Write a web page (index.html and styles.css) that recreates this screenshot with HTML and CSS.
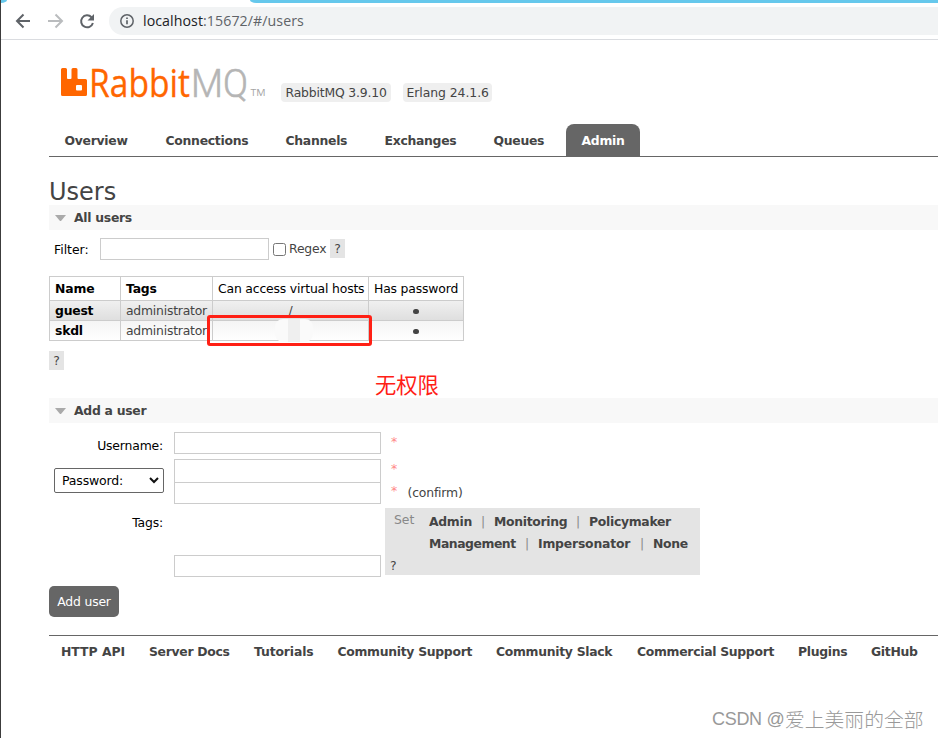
FILE: index.html
```
<!DOCTYPE html>
<html lang="en">
<head>
<meta charset="utf-8">
<title>RabbitMQ Management</title>
<link rel="stylesheet" href="styles.css">
</head>
<body>
<div class="window">
  <div class="tabstrip"><span class="strip-left"></span><span class="strip-right"></span></div>
  <div class="toolbar">
    <svg class="nav-icons" width="100" height="22" viewBox="0 0 100 22" fill="none" stroke-width="2">
      <path d="M30 11H17.5M23.500 4.500L17 11l6.500 6.500" stroke="#5f6368"/>
      <path d="M48 11h13.500M55.500 4.500L62 11l-6.500 6.500" stroke="#babcbe"/>
      <path d="M91.500 7.200A6 6 0 1 0 92.900 13" stroke="#5f6368"/>
      <path d="M94 4v6.500h-6.500z" fill="#5f6368"/>
    </svg>
    <div class="omnibox">
      <svg width="16" height="16" viewBox="0 0 16 16" fill="none" stroke="#5f6368"><circle cx="8" cy="8" r="6.200" stroke-width="1.500"/><path d="M8 7.200v4M8 4.500v1.600" stroke-width="1.700"/></svg>
      <span class="url"><b>localhost</b>:15672/#/users</span>
    </div>
  </div>
  <div class="page">
    <header class="header">
      <svg class="logo" width="220" height="56" viewBox="0 0 220 56">
        <path fill="#f60" fill-rule="evenodd" d="M13 9.500q0-1.500 1.500-1.500h3q1.500 0 1.500 1.500V18q0 1 1 1h2.500q1 0 1-1V9.500q0-1.500 1.500-1.500h3q1.500 0 1.500 1.500V18q0 1 1 1h7q1.500 0 1.500 1.500v14q0 1.500-1.500 1.500h-23Q13 36 13 34.500zM29 25q-1 0-1 1v3.500q0 1 1 1h4q1 0 1-1V26q0-1-1-1z"/>
        <text class="logo-rabbit" x="41" y="36.500" textLength="101" lengthAdjust="spacingAndGlyphs">Rabbit</text>
        <text class="logo-mq" x="143" y="36.500" textLength="57" lengthAdjust="spacingAndGlyphs">MQ</text>
        <text class="logo-tm" x="202.500" y="36" textLength="15" lengthAdjust="spacingAndGlyphs">TM</text>
      </svg>
      <span class="version v1">RabbitMQ 3.9.10</span>
      <span class="version v2">Erlang 24.1.6</span>
    </header>
    <nav class="tabs">
      <a class="w1">Overview</a><a class="w2">Connections</a><a class="w3">Channels</a><a class="w4">Exchanges</a><a class="w5">Queues</a><a class="selected">Admin</a>
    </nav>
    <h1>Users</h1>
    <h2><i class="arrow"></i>All users</h2>
    <div class="filter">
      <span class="label">Filter:</span><input type="text"><input class="check" type="checkbox"><span class="regex">Regex</span><span class="help">?</span>
    </div>
    <div class="table-wrap">
      <table class="list">
        <thead><tr><th class="strong">Name</th><th class="strong">Tags</th><th>Can access virtual hosts</th><th>Has password</th></tr></thead>
        <tbody>
          <tr class="alt1"><td class="strong">guest</td><td>administrator</td><td class="c">/</td><td class="c"><i class="dot"></i></td></tr>
          <tr class="alt2"><td class="strong">skdl</td><td>administrator</td><td class="c"></td><td class="c"><i class="dot"></i></td></tr>
        </tbody>
      </table>
      <span class="smudge"></span>
      <span class="marker"></span>
    </div>
    <span class="help below">?</span>
    <div class="note">无权限</div>
    <h2><i class="arrow"></i>Add a user</h2>
    <form class="form">
      <div class="label user-label">Username:</div>
      <div class="field"><input type="text"><span class="star">*</span></div>
      <div class="select">Password:<svg width="10" height="7" viewBox="0 0 10 7"><path d="M1 1l4 4 4-4" fill="none" stroke="#111" stroke-width="2"/></svg></div>
      <div class="pair">
        <div class="field"><input type="text"><span class="star">*</span></div>
        <div class="field"><input type="text"><span class="star">*</span><span class="confirm">(confirm)</span></div>
      </div>
      <div class="label tag-label">Tags:</div>
      <div class="tags">
        <input type="text">
        <div class="tagbox">
          <span class="set">Set</span>
          <div class="options">
            <div><b class="o1">Admin</b><i>|</i><b class="o2">Monitoring</b><i>|</i><b class="o3">Policymaker</b></div>
            <div><b class="o4">Management</b><i>|</i><b class="o5">Impersonator</b><i>|</i><b class="o6">None</b></div>
          </div>
          <span class="q">?</span>
        </div>
      </div>
    </form>
    <div class="button">Add user</div>
    <footer class="footer">
      <a class="f1">HTTP API</a><a class="f2">Server Docs</a><a class="f3">Tutorials</a><a class="f4">Community Support</a><a class="f5">Community Slack</a><a class="f6">Commercial Support</a><a class="f7">Plugins</a><a class="f8">GitHub</a>
    </footer>
    <div class="watermark"><span>CSDN @</span>爱上美丽的全部</div>
  </div>
</div>
</body>
</html>
```
FILE: styles.css
```
* { box-sizing: border-box; }
body { margin: 0; background: #fff; overflow: hidden; color: #444; font: 12.4px/20px "DejaVu Sans", Verdana, sans-serif; letter-spacing: -.17px; }
.window { height: 738px; border-left: 1px solid #3c3c3c; }
a, span, b, th, td, div { white-space: nowrap; }
.tabstrip { display: flex; justify-content: space-between; height: 3px; }
.strip-left { width: 6px; background: #66c8ec; border-bottom-right-radius: 6px 3px; }
.strip-right { width: 688px; background: #66c8ec; border-bottom-left-radius: 6px 3px; }
.toolbar { height: 37px; border-bottom: 1px solid #dadce0; display: flex; align-items: flex-start; padding-top: 4px; }
.nav-icons { margin-top: 3px; margin-left: -1px; flex: none; }
.omnibox { margin-left: 9px; flex: 1; height: 28px; border-radius: 14px 0 0 14px; background: #f1f3f4; display: flex; align-items: center; padding-left: 10px; }
.url { margin-left: 8px; font: 14.2px/20px "Open Sans", sans-serif; color: #5f6368; letter-spacing: 0.07px; }
.url b { font-weight: 400; color: #202124; }
.page { padding-left: 48px; height: 698px; }
.header { display: flex; height: 84px; padding-top: 20px; }
.logo { flex: none; margin-left: -1px; letter-spacing: 0; overflow: visible; }
.logo-rabbit { font: 38px "Open Sans", sans-serif; fill: #f60; stroke: #f60; stroke-width: .3; }
.logo-mq { font: 300 39.500px Roboto, sans-serif; fill: #b5b5b5; stroke: #b5b5b5; stroke-width: .6; }
.logo-tm { font: 9.500px "Open Sans", sans-serif; fill: #a5a5a5; }
.version { margin-top: 23px; height: 19px; line-height: 19px; background: #efefef; border-radius: 4px; padding-left: 4.500px; }
.v1 { width: 110px; margin-left: 13px; }
.v2 { width: 89px; margin-left: 12px; padding-left: 3.500px; letter-spacing: -.05px; }
.tabs { display: flex; height: 33px; border-bottom: 1px solid #666; font-weight: 700; line-height: 33px; letter-spacing: -.28px; }
.tabs a { padding-left: 15.500px; margin-right: 8px; }
.tabs .w1 { width: 93px; } .tabs .w2 { width: 112px; } .tabs .w3 { width: 91px; } .tabs .w4 { width: 101px; } .tabs .w5 { width: 80px; }
.tabs .selected { width: 74px; background: #666; color: #fff; border-radius: 8px 8px 0 0; margin: 0; }
h1 { margin: 20px 0 0; height: 28px; font-size: 24px; line-height: 31px; font-weight: 400; letter-spacing: 0; }
h2 { margin: 0; height: 25px; background: #f8f8f8; font-size: 12.4px; line-height: 25px; display: flex; align-items: center; padding-left: 6px; letter-spacing: -.28px; }
.arrow { width: 11px; border: solid transparent; border-width: 6px 5.5px 0; border-top-color: #aaa; margin-right: 8px; }
.label { color: #000; }
input { font: inherit; }
input[type=text] { display: block; height: 22px; border: 1px solid #ccc; padding: 0; margin: 0; background: #fff; }
.filter { display: flex; align-items: center; height: 22px; margin-top: 8px; padding-left: 5px; }
.filter .label { width: 46px; line-height: 22px; padding-top: 1px; letter-spacing: 0; }
.filter input[type=text] { width: 169px; }
.filter .check { width: 13px; height: 13px; margin: 0 3px 0 4px; }
.regex { width: 41px; }
.help { display: block; width: 15px; height: 19px; line-height: 19px; text-align: center; background: #e4e4e4; }
.filter .help { margin-top: -1px; }
.table-wrap { position: relative; margin-top: 16px; height: 75px; }
.list { border-collapse: collapse; table-layout: fixed; width: 415px; line-height: 19px; }
.list th, .list td { border: 1px solid #ccc; padding: 0 0 0 5px; text-align: left; height: 20px; font-weight: 400; }
.list th { color: #000; height: 24px; }
.list td { letter-spacing: -.22px; }
.list .strong { font-weight: 700; color: #000; }
.list th:nth-child(1) { width: 71px; } .list th:nth-child(2) { width: 92px; } .list th:nth-child(3) { width: 156px; } .list th:nth-child(4) { width: 95px; }
.list .c { text-align: center; padding: 0; }
.alt1 { background: linear-gradient(#f0f0f0, #dedede); }
.alt2 { background: linear-gradient(#f5f5f5, #fff); }
.dot { display: inline-block; width: 5.500px; height: 5.500px; border-radius: 50%; background: #444; vertical-align: 1px; }
.marker { position: absolute; left: 158px; top: 39px; width: 165px; height: 31px; border: 3px solid #ff2015; border-radius: 3px; }
.smudge { position: absolute; left: 226px; top: 43px; width: 38px; height: 23px; border-radius: 8px; background: linear-gradient(90deg, #fafafa 13px, #efefef 13px, #efefef 25px, #fafafa 25px); }
.note { height: 28px; padding-left: 326px; color: #ff2015; font: 21.300px/27px "Noto Sans CJK SC", sans-serif; letter-spacing: 0; }
.form { display: grid; grid-template-columns: 125px auto; grid-template-rows: 27px 45px 73px; padding-top: 9px; margin: 0; }
.user-label { justify-self: end; margin-right: 11px; padding-top: 4px; }
.field { display: flex; height: 22px; }
.field input[type=text] { width: 207px; }
.star { width: 16.500px; margin-left: 10px; color: #f88; line-height: 19px; }
.confirm { line-height: 21px; }
.select { width: 110px; height: 25px; margin: 9px 0 0 5px; border: 1px solid #666; border-radius: 2px; color: #000; line-height: 23px; padding: 0 4px 0 7px; display: flex; justify-content: space-between; align-items: center; font-size: 12.500px; }
.pair .field { height: 23px; }
.pair input[type=text] { height: 24px; }
.pair .field + .field input[type=text] { height: 22px; }
.pair .field + .field .star { line-height: 17px; }
.tag-label { justify-self: end; margin-right: 11px; padding-top: 9px; }
.tags { display: flex; align-items: flex-start; }
.tags input[type=text] { width: 207px; margin: 51px 4px 0 0; }
.tagbox { width: 315px; height: 67px; margin-top: 4px; background: #e4e4e4; display: grid; grid-template-columns: 44px auto; grid-template-rows: 46px 21px; }
.set { color: #888; padding: 2px 0 0 9px; letter-spacing: 0; }
.options { line-height: 22px; padding-top: 3px; letter-spacing: -.3px; }
.options div { display: flex; }
.options i { width: 22px; text-align: center; font-style: normal; color: #888; }
.o1 { width: 43px; } .o2 { width: 73px; } .o4 { width: 87px; letter-spacing: -.45px; } .o5 { width: 93px; letter-spacing: -.2px; }
.q { padding-left: 5px; line-height: 23px; }
.button { width: 70px; height: 31px; margin-top: 9px; background: #666; color: #fff; border-radius: 5px; line-height: 31px; text-align: center; }
.footer { display: flex; margin-top: 18px; border-top: 1px solid #666; padding: 5px 0 0 12px; line-height: 22px; font-weight: 700; height: 70px; letter-spacing: -.3px; }
.f1 { width: 88px; letter-spacing: 0; } .f2 { width: 105px; } .f3 { width: 83.500px; letter-spacing: -.12px; } .f4 { width: 158.500px; } .f5 { width: 141px; } .f6 { width: 161px; } .f7 { width: 73px; } .f8 { width: 50px; }
.watermark { width: 214px; margin: 0 0 0 663px; font: 19.800px/28px "Noto Sans CJK SC", sans-serif; font-weight: 300; color: #999; letter-spacing: 0; display: flex; }
.watermark span { width: 73px; font: 18px/28px "Liberation Sans", sans-serif; letter-spacing: -.3px; }
```
